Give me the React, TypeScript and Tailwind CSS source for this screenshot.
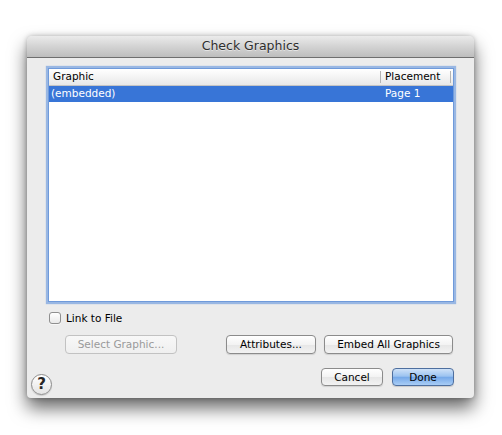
import React from "react";

const font = { fontFamily: '"DejaVu Sans", "Liberation Sans", sans-serif' };

function PushButton({
  label,
  width,
  disabled,
  primary,
}: {
  label: string;
  width: string;
  disabled?: boolean;
  primary?: boolean;
}) {
  const base =
    "flex items-center justify-center rounded-[4px] border text-[10.5px] leading-none";
  let look =
    "border-[#8b8b8b] bg-[linear-gradient(#ffffff,#f3f3f3_50%,#e6e6e6_51%,#f2f2f2)] text-black shadow-[0_1px_1px_rgba(0,0,0,0.12)]";
  if (disabled)
    look =
      "border-[#c2c2c2] bg-[linear-gradient(#f8f8f8,#efefef)] text-[#9a9a9a]";
  if (primary)
    look =
      "border-[#4e6f9f] bg-[linear-gradient(#cfe2f8,#9cc3f0_45%,#76a9e9_52%,#a9cdf5)] text-black shadow-[0_1px_1px_rgba(0,0,0,0.15)]";
  return <div className={`${base} ${look} ${width}`}>{label}</div>;
}

export default function App() {
  return (
    <div className="min-h-[435px] w-[502px] bg-white pl-[27px] pt-[36px]" style={font}>
      <div className="flex h-[362px] w-[447px] flex-col rounded-t-[5px] rounded-b-[4px] bg-[#ececec] shadow-[0_10px_18px_rgba(0,0,0,0.6),0_0_5px_rgba(0,0,0,0.25)]">
        {/* title bar */}
        <div className="flex h-[22px] shrink-0 items-center justify-center rounded-t-[5px] border-b border-[#6e6e6e] bg-[linear-gradient(#ebebeb,#d3d3d3_50%,#bdbdbd)]">
          <span className="text-[12.5px] text-[#2e2e2e] [text-shadow:0_1px_0_rgba(255,255,255,0.5)]">
            Check Graphics
          </span>
        </div>

        {/* graphics list */}
        <div className="ml-[22px] mt-[11px] flex h-[232px] w-[404px] shrink-0 flex-col bg-white shadow-[0_0_0_1px_#6f9ada,0_0_1px_3px_rgba(126,166,224,0.75)]">
          <div className="flex h-[17px] shrink-0 items-stretch border-b border-[#c4c4c4] bg-[linear-gradient(#ffffff,#f4f4f4_50%,#e8e8e8)] text-[10.5px] text-black">
            <div className="flex flex-1 items-center pl-[4px]">Graphic</div>
            <div className="my-[2px] w-px bg-[#b4b4b4]" />
            <div className="flex w-[69px] items-center pl-[4px]">Placement</div>
            <div className="my-[2px] w-px bg-[#b4b4b4]" />
            <div className="w-[2px]" />
          </div>
          <div className="flex h-[16px] items-center bg-[#3875d7] text-[10.5px] text-white">
            <div className="flex-1 pl-[2px]">(embedded)</div>
            <div className="w-[72px] pl-[4px]">Page 1</div>
          </div>
        </div>

        {/* link option */}
        <div className="ml-[22px] mt-[11px] flex h-[12px] shrink-0 items-center gap-[5px]">
          <div className="h-[12px] w-[12px] rounded-[3px] border border-[#8f8f8f] bg-[linear-gradient(#ffffff,#e9e9e9)] shadow-[0_1px_0_rgba(255,255,255,0.6)]" />
          <span className="text-[10.5px] leading-none text-black">Link to File</span>
        </div>

        {/* graphic actions */}
        <div className="ml-[38px] mt-[11px] flex h-[19px] shrink-0 items-stretch">
          <PushButton label="Select Graphic..." width="w-[112px]" disabled />
          <div className="ml-[49px] flex gap-[8px]">
            <PushButton label="Attributes..." width="w-[90px]" />
            <PushButton label="Embed All Graphics" width="w-[129px]" />
          </div>
        </div>

        {/* dialog buttons */}
        <div className="mt-[14px] flex items-start pl-[4px] pr-[20px]">
          <div className="mt-[6px] flex h-[21px] w-[21px] items-center justify-center rounded-full border border-[#8d8d8d] bg-[linear-gradient(#ffffff,#e4e4e4)] text-[15px] font-bold leading-none text-[#262626] shadow-[0_1px_1px_rgba(0,0,0,0.15)]">
            ?
          </div>
          <div className="ml-auto flex h-[18px] gap-[9px]">
            <PushButton label="Cancel" width="w-[62px]" />
            <PushButton label="Done" width="w-[62px]" primary />
          </div>
        </div>
      </div>
    </div>
  );
}
